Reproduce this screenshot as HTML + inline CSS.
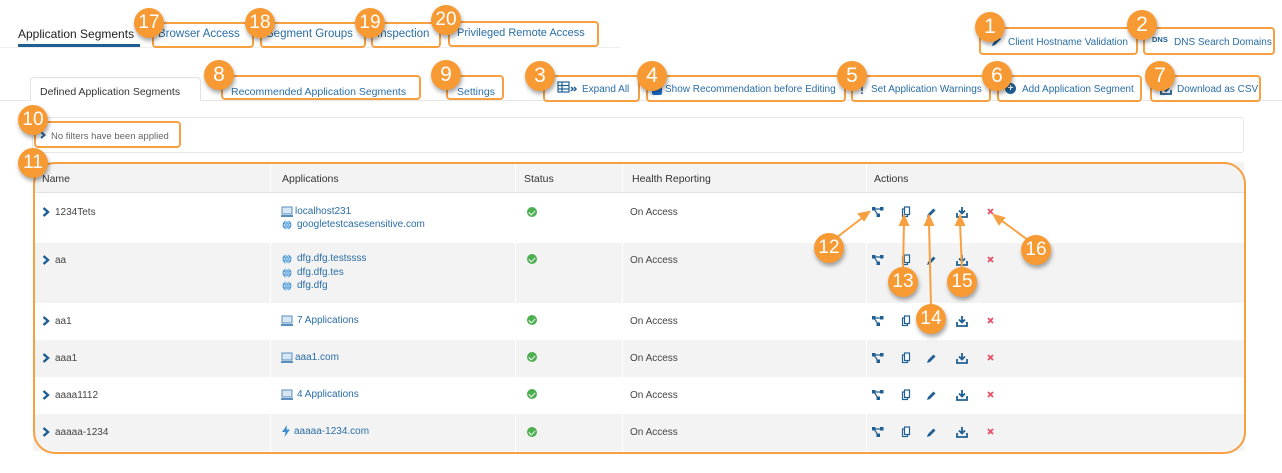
<!DOCTYPE html>
<html><head><meta charset="utf-8">
<style>
*{box-sizing:border-box;margin:0;padding:0}
body{width:1282px;height:473px;background:#fff;font-family:"Liberation Sans",sans-serif;position:relative;overflow:hidden;color:#333}
.a{position:absolute;white-space:nowrap}
.ob{position:absolute;border:2px solid #f7a042;border-radius:4px}
.bd{position:absolute;width:30px;height:30px;border-radius:50%;background:#f79a33;color:#fff;font-size:21px;text-align:center;line-height:30px;box-shadow:1px 3px 4px rgba(0,0,0,.35);z-index:5}
.lk{color:#2a6ea6;font-size:11px}
.t{font-size:10px;color:#444}
.row{position:absolute;left:33px;width:1211px}
.g{background:#f3f3f3}
.ok{position:absolute;width:10px;height:10px;border-radius:50%;background:#4caf50}
.ok:after{content:"";position:absolute;left:3px;top:2px;width:3px;height:5px;border:solid #fff;border-width:0 1.5px 1.5px 0;transform:rotate(45deg)}
.sep{position:absolute;top:0;bottom:0;width:1px;background:#fff}
.ch{position:absolute;left:42px;width:8px;height:10px}
</style></head><body>

<!-- top tabs -->
<div class="a" style="left:18px;top:27px;font-size:12px;color:#222">Application Segments</div>
<div class="a" style="left:18px;top:44px;width:122px;height:3px;background:#1f5f94"></div>
<div class="a" style="left:0;top:47px;width:620px;height:1px;background:#eee"></div>
<div class="a lk" style="left:158px;top:28px;font-size:11.5px">Browser Access</div>
<div class="a lk" style="left:266px;top:28px;font-size:11.5px">Segment Groups</div>
<div class="a lk" style="left:377px;top:28px;font-size:11.5px">Inspection</div>
<div class="a lk" style="left:457px;top:27px;font-size:11px">Privileged Remote Access</div>
<div class="ob" style="left:152px;top:22px;width:102px;height:26px"></div>
<div class="ob" style="left:260px;top:22px;width:106px;height:26px"></div>
<div class="ob" style="left:371px;top:22px;width:70px;height:26px"></div>
<div class="ob" style="left:448px;top:21px;width:151px;height:26px"></div>

<!-- top right -->
<svg class="a" style="left:990px;top:36px" width="12" height="12" viewBox="0 0 12 12"><path d="M2 10 L3 7 L9 1 L11 3 L5 9 Z" fill="#1f5f94"/></svg>
<div class="a lk" style="left:1008px;top:37px;font-size:10px">Client Hostname Validation</div>
<div class="a" style="left:1152px;top:35px;font-size:7.5px;color:#1f5f94;font-weight:bold">DNS</div>
<div class="a lk" style="left:1174px;top:37px;font-size:10px">DNS Search Domains</div>
<div class="ob" style="left:979px;top:27px;width:159px;height:28px"></div>
<div class="ob" style="left:1143px;top:27px;width:132px;height:28px"></div>

<!-- sub tabs -->
<div class="a" style="left:0;top:100px;width:1282px;height:1px;background:#e6e6e6"></div>
<div class="a" style="left:30px;top:77px;width:171px;height:24px;border:1px solid #e2e2e2;border-bottom:1px solid #fff;border-radius:4px 4px 0 0;background:#fff"></div>
<div class="a" style="left:40px;top:86px;font-size:10.5px;color:#333">Defined Application Segments</div>
<div class="a lk" style="left:231px;top:86px;font-size:10.5px">Recommended Application Segments</div>
<div class="a lk" style="left:457px;top:86px;font-size:10.5px">Settings</div>
<div class="ob" style="left:221px;top:75px;width:200px;height:25px"></div>
<div class="ob" style="left:446px;top:75px;width:58px;height:25px"></div>

<!-- buttons row -->
<svg class="a" style="left:557px;top:81px" width="22" height="12" viewBox="0 0 22 12"><g stroke="#1f5f94" fill="none" stroke-width="1.2"><rect x="1" y="1" width="11" height="10"/><line x1="1" y1="4.5" x2="12" y2="4.5"/><line x1="1" y1="8" x2="12" y2="8"/><line x1="5" y1="1" x2="5" y2="11"/><path d="M14 6 l2 2 l-2 2 M17 6 l2 2 l-2 2" stroke-width="1.5"/></g></svg>
<div class="a lk" style="left:582px;top:84px;font-size:10px">Expand All</div>
<div class="a" style="left:652px;top:85px;width:10px;height:10px;background:#1e6fd0;border-radius:2px"></div>
<div class="a lk" style="left:665px;top:84px;font-size:10px">Show Recommendation before Editing</div>
<div class="a" style="left:860px;top:83px;font-size:12px;color:#1f5f94;font-weight:bold">!</div>
<div class="a lk" style="left:871px;top:84px;font-size:10px">Set Application Warnings</div>
<div class="a" style="left:1005px;top:83px;width:11px;height:11px;border-radius:50%;background:#1f5f94;color:#fff;font-size:10px;line-height:11px;text-align:center;font-weight:bold">+</div>
<div class="a lk" style="left:1022px;top:84px;font-size:10px">Add Application Segment</div>
<svg class="a" style="left:1160px;top:84px" width="12" height="11" viewBox="0 0 12 11"><path d="M1 6 V10 H11 V6 M6 1 V7 M3 4 L6 7 L9 4" stroke="#1f5f94" stroke-width="1.8" fill="none"/></svg>
<div class="a lk" style="left:1177px;top:84px;font-size:10px">Download as CSV</div>
<div class="ob" style="left:543px;top:75px;width:97px;height:27px"></div>
<div class="ob" style="left:646px;top:75px;width:200px;height:27px"></div>
<div class="ob" style="left:851px;top:75px;width:140px;height:27px"></div>
<div class="ob" style="left:997px;top:75px;width:145px;height:27px"></div>
<div class="ob" style="left:1150px;top:75px;width:111px;height:27px"></div>

<!-- filter bar -->
<div class="a" style="left:32px;top:117px;width:1212px;height:36px;border:1px solid #e6e6e6;border-radius:3px"></div>
<svg class="a" style="left:40px;top:131px" width="6" height="8" viewBox="0 0 6 8"><path d="M1 1 L4.5 4 L1 7" stroke="#1f5f94" stroke-width="2" fill="none"/></svg>
<div class="a" style="left:51px;top:131px;font-size:9.5px;color:#666">No filters have been applied</div>
<div class="ob" style="left:34px;top:121px;width:147px;height:27px"></div>

<!-- table -->
<div class="row g" style="top:162px;height:31px;border-bottom:1px solid #e3e3e3"><div class="sep" style="left:237px"></div><div class="sep" style="left:482px"></div><div class="sep" style="left:589px"></div><div class="sep" style="left:833px"></div></div>
<div class="a" style="left:42px;top:173px;font-size:10.5px;color:#333">Name</div>
<div class="a" style="left:282px;top:173px;font-size:10.5px;color:#333">Applications</div>
<div class="a" style="left:524px;top:173px;font-size:10.5px;color:#333">Status</div>
<div class="a" style="left:632px;top:173px;font-size:10.5px;color:#333">Health Reporting</div>
<div class="a" style="left:874px;top:173px;font-size:10.5px;color:#333">Actions</div>

<div class="row g" style="top:243px;height:60px"><div class="sep" style="left:237px"></div><div class="sep" style="left:482px"></div><div class="sep" style="left:589px"></div><div class="sep" style="left:833px"></div></div>
<div class="row g" style="top:340px;height:37px"><div class="sep" style="left:237px"></div><div class="sep" style="left:482px"></div><div class="sep" style="left:589px"></div><div class="sep" style="left:833px"></div></div>
<div class="row g" style="top:414px;height:37px"><div class="sep" style="left:237px"></div><div class="sep" style="left:482px"></div><div class="sep" style="left:589px"></div><div class="sep" style="left:833px"></div></div>

<!-- row names -->
<svg width="0" height="0" style="position:absolute"><defs><symbol id="chv" viewBox="0 0 8 10"><path d="M1.5 1 L6 5 L1.5 9" stroke="#1f5f94" stroke-width="2.4" fill="none"/></symbol></defs></svg>
<svg class="ch" style="top:207px"><use href="#chv"/></svg><div class="a t" style="left:55px;top:207px">1234Tets</div>
<svg class="ch" style="top:255px"><use href="#chv"/></svg><div class="a t" style="left:55px;top:255px">aa</div>
<svg class="ch" style="top:316px"><use href="#chv"/></svg><div class="a t" style="left:55px;top:316px">aa1</div>
<svg class="ch" style="top:353px"><use href="#chv"/></svg><div class="a t" style="left:55px;top:353px">aaa1</div>
<svg class="ch" style="top:390px"><use href="#chv"/></svg><div class="a t" style="left:55px;top:390px">aaaa1112</div>
<svg class="ch" style="top:427px"><use href="#chv"/></svg><div class="a t" style="left:55px;top:427px">aaaaa-1234</div>

<!-- apps -->
<svg width="0" height="0" style="position:absolute"><defs>
<symbol id="app" viewBox="0 0 12 11"><rect x="1" y="1" width="10" height="7" fill="#d6e6f3" stroke="#5a8fbf"/><rect x="0" y="9" width="12" height="2" fill="#5a8fbf"/></symbol>
<symbol id="glb" viewBox="0 0 10 10"><circle cx="5" cy="5" r="4.5" fill="#3b8fd0"/><path d="M0.5 5 H9.5 M5 0.5 V9.5 M5 0.5 C2 3 2 7 5 9.5 M5 0.5 C8 3 8 7 5 9.5" stroke="#fff" stroke-width="0.6" fill="none"/></symbol>
</defs></svg>
<svg class="a" style="left:281px;top:206px" width="12" height="11"><use href="#app"/></svg><div class="a lk" style="left:295px;top:206px;font-size:10px">localhost231</div>
<svg class="a" style="left:282px;top:220px" width="10" height="10"><use href="#glb"/></svg><div class="a lk" style="left:297px;top:219px;font-size:10px">googletestcasesensitive.com</div>
<svg class="a" style="left:282px;top:254px" width="10" height="10"><use href="#glb"/></svg><div class="a lk" style="left:297px;top:253px;font-size:10px">dfg.dfg.testssss</div>
<svg class="a" style="left:282px;top:268px" width="10" height="10"><use href="#glb"/></svg><div class="a lk" style="left:297px;top:267px;font-size:10px">dfg.dfg.tes</div>
<svg class="a" style="left:282px;top:281px" width="10" height="10"><use href="#glb"/></svg><div class="a lk" style="left:297px;top:280px;font-size:10px">dfg.dfg</div>
<svg class="a" style="left:281px;top:315px" width="12" height="11"><use href="#app"/></svg><div class="a lk" style="left:297px;top:315px;font-size:10px">7 Applications</div>
<svg class="a" style="left:281px;top:352px" width="12" height="11"><use href="#app"/></svg><div class="a lk" style="left:295px;top:352px;font-size:10px">aaa1.com</div>
<svg class="a" style="left:281px;top:389px" width="12" height="11"><use href="#app"/></svg><div class="a lk" style="left:297px;top:389px;font-size:10px">4 Applications</div>
<svg class="a" style="left:282px;top:425px" width="8" height="12" viewBox="0 0 8 12"><path d="M5 0 L0 7 H3.5 L2.5 12 L8 4.5 H4.5 Z" fill="#3b8fd0"/></svg><div class="a lk" style="left:294px;top:426px;font-size:10px">aaaaa-1234.com</div>

<!-- status + health -->
<div class="ok" style="left:527px;top:207px"></div><div class="a t" style="left:630px;top:207px">On Access</div>
<div class="ok" style="left:527px;top:254px"></div><div class="a t" style="left:630px;top:255px">On Access</div>
<div class="ok" style="left:527px;top:315px"></div><div class="a t" style="left:630px;top:316px">On Access</div>
<div class="ok" style="left:527px;top:352px"></div><div class="a t" style="left:630px;top:353px">On Access</div>
<div class="ok" style="left:527px;top:389px"></div><div class="a t" style="left:630px;top:390px">On Access</div>
<div class="ok" style="left:527px;top:427px"></div><div class="a t" style="left:630px;top:427px">On Access</div>

<!-- actions -->
<svg width="0" height="0" style="position:absolute"><defs>
<symbol id="acts" viewBox="0 0 130 12">
<g fill="#1f5f94"><rect x="0" y="1" width="3.5" height="3.5"/><rect x="8" y="1" width="3.5" height="3.5"/><rect x="4.5" y="7.5" width="3.5" height="3.5"/></g>
<path d="M2 3 H10 M2 3 L6 9" stroke="#1f5f94" stroke-width="1.2" fill="none"/>
<g stroke="#1f5f94" fill="#fff" stroke-width="1.2"><rect x="30.5" y="3" width="5" height="7.5"/><rect x="32.5" y="1" width="5" height="7.5"/></g>
<path d="M55 11 L56 8 L61.5 2.5 L63.5 4.5 L58 10 Z" fill="#1f5f94"/>
<path d="M85 7 V11 H95 V7 M90 1 V7 M87 4.5 L90 7.5 L93 4.5" stroke="#1f5f94" stroke-width="1.8" fill="none"/>
<path d="M116 3 L121 8 M121 3 L116 8" stroke="#e8506a" stroke-width="1.8"/>
</symbol></defs></svg>
<svg class="a" style="left:872px;top:206px" width="130" height="12"><use href="#acts"/></svg>
<svg class="a" style="left:872px;top:254px" width="130" height="12"><use href="#acts"/></svg>
<svg class="a" style="left:872px;top:315px" width="130" height="12"><use href="#acts"/></svg>
<svg class="a" style="left:872px;top:352px" width="130" height="12"><use href="#acts"/></svg>
<svg class="a" style="left:872px;top:389px" width="130" height="12"><use href="#acts"/></svg>
<svg class="a" style="left:872px;top:426px" width="130" height="12"><use href="#acts"/></svg>

<!-- table orange border -->
<div class="a" style="left:33px;top:162px;width:1213px;height:292px;border:2px solid #f7a042;border-radius:22px;z-index:3"></div>

<!-- arrows -->
<svg class="a" style="left:0;top:0;z-index:4" width="1282" height="473">
<g stroke="#f7a042" stroke-width="2" fill="#f7a042">
<line x1="836" y1="238" x2="866" y2="215"/><path d="M869 212 L859 214 L864 220 Z"/>
<line x1="903" y1="270" x2="904" y2="222"/><path d="M904 216 L900 225 L908 225 Z"/>
<line x1="931" y1="307" x2="929" y2="222"/><path d="M929 216 L925 225 L933 225 Z"/>
<line x1="962" y1="270" x2="960" y2="222"/><path d="M960 216 L956 225 L964 225 Z"/>
<line x1="1028" y1="240" x2="998" y2="218"/><path d="M994 215 L999 224 L1004 218 Z"/>
</g></svg>

<!-- badges -->
<div class="bd" style="left:975px;top:12px">1</div>
<div class="bd" style="left:1127px;top:10px">2</div>
<div class="bd" style="left:525px;top:61px">3</div>
<div class="bd" style="left:637px;top:61px">4</div>
<div class="bd" style="left:837px;top:61px">5</div>
<div class="bd" style="left:982px;top:61px">6</div>
<div class="bd" style="left:1145px;top:61px">7</div>
<div class="bd" style="left:204px;top:60px">8</div>
<div class="bd" style="left:431px;top:60px">9</div>
<div class="bd" style="left:18px;top:105px;font-size:19px">10</div>
<div class="bd" style="left:18px;top:148px;font-size:19px">11</div>
<div class="bd" style="left:814px;top:233px;font-size:19px">12</div>
<div class="bd" style="left:888px;top:267px;font-size:19px">13</div>
<div class="bd" style="left:916px;top:304px;font-size:19px">14</div>
<div class="bd" style="left:947px;top:267px;font-size:19px">15</div>
<div class="bd" style="left:1021px;top:235px;font-size:19px">16</div>
<div class="bd" style="left:134px;top:8px;font-size:19px">17</div>
<div class="bd" style="left:245px;top:8px;font-size:19px">18</div>
<div class="bd" style="left:355px;top:8px;font-size:19px">19</div>
<div class="bd" style="left:431px;top:5px;font-size:19px">20</div>
</body></html>
